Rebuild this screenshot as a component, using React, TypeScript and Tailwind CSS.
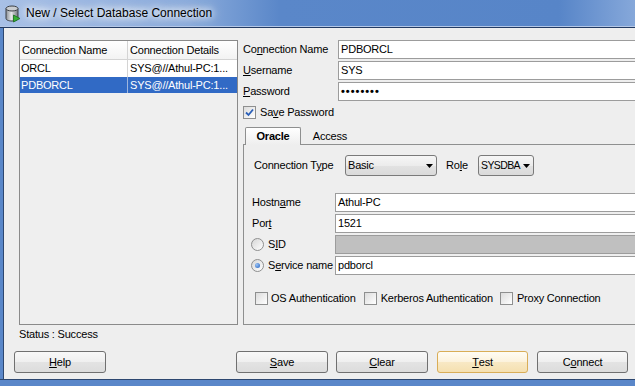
import React from "react";

function U({ children }: { children: React.ReactNode }) {
  return <span className="underline decoration-1 underline-offset-[1px]">{children}</span>;
}

function Field({ value, gray, dots }: { value?: string; gray?: boolean; dots?: boolean }) {
  return (
    <div
      className={`h-[19px] flex-1 border border-[#9c9c9c] flex items-center pl-[2px] ${
        gray ? "bg-[#c0c0c0]" : "bg-white"
      } ${dots ? "font-bold tracking-[1px]" : ""}`}
    >
      {value}
    </div>
  );
}

function Check({ checked }: { checked?: boolean }) {
  return (
    <div className="w-[13px] h-[13px] shrink-0 border border-[#8e8f8f] bg-[linear-gradient(135deg,#dcdcdc,#ffffff)] flex items-center justify-center">
      {checked && (
        <svg width="9" height="9" viewBox="0 0 9 9">
          <path d="M1 4.5 L3.5 7 L8 1.5" fill="none" stroke="#2a5fb8" strokeWidth="1.8" />
        </svg>
      )}
    </div>
  );
}

function Radio({ checked }: { checked?: boolean }) {
  return (
    <div className="w-[13px] h-[13px] shrink-0 rounded-full border border-[#8e8f8f] bg-[linear-gradient(135deg,#d6d6d6,#ffffff)] flex items-center justify-center">
      {checked && <div className="w-[5px] h-[5px] rounded-full bg-[radial-gradient(circle_at_35%_35%,#9cc4f4,#1f5fc0)]" />}
    </div>
  );
}

function Arrow() {
  return (
    <svg width="7" height="4" viewBox="0 0 7 4" className="shrink-0">
      <path d="M0 0 H7 L3.5 4 Z" fill="#000" />
    </svg>
  );
}

function Btn({ children, active, className = "" }: { children: React.ReactNode; active?: boolean; className?: string }) {
  return (
    <div
      className={`h-[22px] shrink-0 rounded-[3px] border flex items-center justify-center ${
        active
          ? "border-[#d9ad57] bg-[linear-gradient(#fffcf4,#fcf2dc_50%,#f8e8c4_52%,#f5e0b0)]"
          : "border-[#707070] bg-[linear-gradient(#f8f8f8,#efefef_50%,#e3e3e3_52%,#dcdcdc)]"
      } ${className}`}
    >
      {children}
    </div>
  );
}

function DbIcon() {
  return (
    <svg width="16" height="18" viewBox="0 0 16 18">
      <defs>
        <linearGradient id="cyl" x1="0" x2="1">
          <stop offset="0" stopColor="#8a8f96" />
          <stop offset="0.45" stopColor="#e6e8ea" />
          <stop offset="1" stopColor="#6f747b" />
        </linearGradient>
      </defs>
      <path d="M1 3.5 V13.5 C1 15 3.7 16 7 16 S13 15 13 13.5 V3.5" fill="url(#cyl)" stroke="#3b3f45" />
      <ellipse cx="7" cy="3.5" rx="6" ry="2.5" fill="#c9ccd0" stroke="#3b3f45" />
      <path d="M8.5 10 L15 13.5 L8.5 17 Z" fill="#35b035" stroke="#16691a" strokeWidth="0.8" />
    </svg>
  );
}

export default function App() {
  return (
    <div className="w-[635px] h-[386px] overflow-hidden flex flex-col bg-[#5a87c9] font-['Liberation_Sans',Arial,sans-serif] text-[11px] tracking-[-0.2px] text-black">
      {/* Title bar */}
      <div className="h-[26px] shrink-0 flex items-center bg-[linear-gradient(90deg,#a8c0e6_0%,#8aabdb_30%,#5a87c9_44%,#5785c8_88%,#86a8da_100%)]">
        <div className="ml-[5px] mt-[1px]">
          <DbIcon />
        </div>
        <span className="ml-[5px] text-[12px] tracking-normal [text-shadow:0_0_6px_#fff,0_0_10px_#fff,0_0_14px_#fff]">
          New / Select Database Connection
        </span>
      </div>
      <div className="h-[1px] shrink-0 bg-[#b4c7e6]" />
      <div className="h-[1px] shrink-0 bg-[#233b63]" />

      <div className="flex-1 flex min-h-0">
        <div className="w-[3px] shrink-0 bg-[#5a87c9]" />
        <div className="w-[1px] shrink-0 bg-[#2d4770]" />

        {/* Content */}
        <div className="flex-1 min-w-0 overflow-hidden bg-[#eeeeee] flex flex-col pt-[12px]">
          <div className="flex h-[285px]">
            {/* Connection table */}
            <div className="ml-[15px] w-[219px] shrink-0 h-[285px] border border-[#8a8a8a] bg-[#efefef] flex flex-col">
              <div className="h-[19px] flex bg-[linear-gradient(#ffffff,#f3f3f3)] border-b border-[#d4d4d4]">
                <div className="w-[108px] border-r border-[#d4d4d4] pl-[2px] flex items-center">Connection Name</div>
                <div className="flex-1 pl-[2px] flex items-center">Connection Details</div>
              </div>
              <div className="h-[17px] flex bg-white">
                <div className="w-[108px] border-r border-[#d4d4d4] pl-[1px] flex items-center">ORCL</div>
                <div className="flex-1 pl-[2px] flex items-center whitespace-nowrap overflow-hidden">SYS@//Athul-PC:1...</div>
              </div>
              <div className="h-[16px] flex bg-[#316ac5] text-white">
                <div className="w-[108px] border-r border-[#9fb6de] pl-[1px] flex items-center">PDBORCL</div>
                <div className="flex-1 pl-[2px] flex items-center whitespace-nowrap overflow-hidden">SYS@//Athul-PC:1...</div>
              </div>
            </div>

            {/* Right form */}
            <div className="ml-[5px] w-[400px] shrink-0 flex flex-col">
              <div className="flex flex-col gap-[2px]">
                <div className="flex items-center h-[19px]">
                  <div className="w-[95px]">
                    Co<U>n</U>nection Name
                  </div>
                  <Field value="PDBORCL" />
                </div>
                <div className="flex items-center h-[19px]">
                  <div className="w-[95px]">
                    <U>U</U>sername
                  </div>
                  <Field value="SYS" />
                </div>
                <div className="flex items-center h-[19px]">
                  <div className="w-[95px]">
                    <U>P</U>assword
                  </div>
                  <Field value="••••••••" dots />
                </div>
              </div>

              <div className="mt-[5px] h-[13px] flex items-center gap-[4px]">
                <Check checked />
                <span>
                  Sa<U>v</U>e Password
                </span>
              </div>

              {/* Tabs */}
              <div className="mt-[8px] h-[17px] flex items-end pl-[2px] relative z-10">
                <div className="w-[56px] h-[18px] -mb-[1px] border border-b-0 border-[#8e8f8f] rounded-t-[2px] bg-[linear-gradient(#ffffff,#eeeeee)] flex items-center justify-center font-bold">
                  Oracle
                </div>
                <div className="w-[58px] h-[16px] flex items-center justify-center">Access</div>
              </div>

              <div className="h-[181px] border border-r-0 border-[#8e8f8f] flex flex-col">
                <div className="mt-[10px] h-[21px] flex items-center pl-[10px]">
                  <div className="w-[91px]">
                    Connection T<U>y</U>pe
                  </div>
                  <div className="w-[92px] h-[21px] rounded-[3px] border border-[#7a7a7a] bg-[linear-gradient(#f6f6f6,#ececec_50%,#e2e2e2_52%,#dadada)] flex items-center justify-between pl-[2px] pr-[3px]">
                    <span>Basic</span>
                    <Arrow />
                  </div>
                  <div className="ml-[9px] w-[32px]">
                    Ro<U>l</U>e
                  </div>
                  <div className="w-[56px] h-[21px] rounded-[3px] border border-[#7a7a7a] bg-[linear-gradient(#f6f6f6,#ececec_50%,#e2e2e2_52%,#dadada)] flex items-center gap-[3px] pl-[2px]">
                    <span className="text-[10.5px] tracking-[-0.6px]">SYSDBA</span>
                    <Arrow />
                  </div>
                </div>

                <div className="mt-[17px] flex flex-col gap-[2px] pl-[7px]">
                  <div className="flex items-center h-[19px]">
                    <div className="w-[84px] pl-[1px]">
                      Hostn<U>a</U>me
                    </div>
                    <Field value="Athul-PC" />
                  </div>
                  <div className="flex items-center h-[19px]">
                    <div className="w-[84px] pl-[1px]">
                      Por<U>t</U>
                    </div>
                    <Field value="1521" />
                  </div>
                  <div className="flex items-center h-[19px]">
                    <div className="w-[84px] flex items-center gap-[4px]">
                      <Radio />
                      <span>
                        S<U>I</U>D
                      </span>
                    </div>
                    <Field gray />
                  </div>
                  <div className="flex items-center h-[19px]">
                    <div className="w-[84px] flex items-center gap-[4px]">
                      <Radio checked />
                      <span>
                        S<U>e</U>rvice name
                      </span>
                    </div>
                    <Field value="pdborcl" />
                  </div>
                </div>

                <div className="mt-[17px] h-[13px] flex items-center pl-[11px]">
                  <Check />
                  <span className="ml-[3px]">OS Authentication</span>
                  <div className="ml-[8px]">
                    <Check />
                  </div>
                  <span className="ml-[4px]">Kerberos Authentication</span>
                  <div className="ml-[7px]">
                    <Check />
                  </div>
                  <span className="ml-[4px]">Proxy Connection</span>
                </div>
              </div>
            </div>
          </div>

          <div className="h-[18px] flex items-center pl-[15px]">Status : Success</div>

          <div className="mt-[8px] flex">
            <Btn className="ml-[10px] w-[92px]">
              <U>H</U>elp
            </Btn>
            <Btn className="ml-[130px] w-[92px]">
              <U>S</U>ave
            </Btn>
            <Btn className="ml-[8px] w-[92px]">
              <U>C</U>lear
            </Btn>
            <Btn active className="ml-[9px] w-[91px]">
              <U>T</U>est
            </Btn>
            <Btn className="ml-[9px] w-[91px]">
              C<U>o</U>nnect
            </Btn>
          </div>
        </div>
      </div>

      <div className="h-[1px] shrink-0 bg-[#2d4770]" />
      <div className="h-[6px] shrink-0 bg-[#5a87c9]" />
    </div>
  );
}
